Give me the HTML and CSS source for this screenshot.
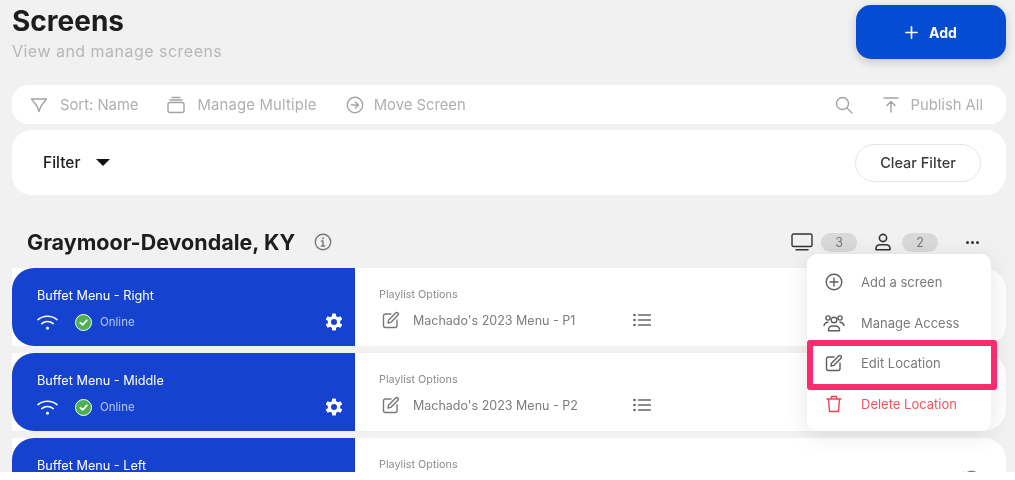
FILE: index.html
```html
<!DOCTYPE html>
<html lang="en">
<head>
    <meta charset="UTF-8">
    <title>Screens</title>
    <link rel="stylesheet" href="styles.css">
</head>
<body>
    <svg class="sprite" width="0" height="0">
        <symbol id="i-funnel" viewBox="0 0 18 18"><path d="M1.5 3h15l-5.6 7.2L9 15.5l-1.9-5.3z"/></symbol>
        <symbol id="i-stack" viewBox="0 0 18 18"><rect x="1" y="6.5" width="16" height="10" rx="2"/><path d="M3 4h12M5 1.5h8"/></symbol>
        <symbol id="i-move" viewBox="0 0 18 18"><circle cx="9" cy="9" r="7.7"/><path d="M5.2 9h7M9.4 6l3 3-3 3"/></symbol>
        <symbol id="i-search" viewBox="0 0 18 18"><circle cx="7.5" cy="7.5" r="6"/><path d="M12 12l5 5"/></symbol>
        <symbol id="i-publish" viewBox="0 0 18 18"><path d="M2 2h14M9 16V6M5 9.5L9 5.5l4 4"/></symbol>
        <symbol id="i-plus" viewBox="0 0 14 14"><path d="M7 1v12M1 7h12"/></symbol>
        <symbol id="i-info" viewBox="0 0 18 18"><circle cx="9" cy="9" r="7.7"/><path d="M7.5 8H9v5M7.3 13h3.4M9 4.8v1"/></symbol>
        <symbol id="i-wifi" viewBox="0 0 20 16"><path d="M1 5.2c5-4.2 13-4.2 18 0M4.6 9c3-2.6 7.8-2.6 10.8 0"/><circle class="solid" cx="10" cy="13.5" r="1.4"/></symbol>
        <symbol id="i-edit" viewBox="0 0 18 18"><path d="M9 3H3.5A2 2 0 0 0 1.5 5v9.5a2 2 0 0 0 2 2H13a2 2 0 0 0 2-2V9"/><path d="M6.5 9.2L13.6 2a1.5 1.5 0 0 1 2.3 2.2l-7.1 7.2-2.8.6z"/></symbol>
        <symbol id="i-list" viewBox="0 0 18 14"><path d="M5.5 2H17.5M5.5 7H17.5M5.5 12H17.5"/><circle class="solid" cx="1.5" cy="2" r="1.3"/><circle class="solid" cx="1.5" cy="7" r="1.3"/><circle class="solid" cx="1.5" cy="12" r="1.3"/></symbol>
        <symbol id="i-gear" viewBox="0 0 18 18"><circle class="gear-ring" cx="9" cy="9" r="4.6"/><g class="solid"><rect x="7" y="0.5" width="4" height="4" rx=".8"/><rect x="7" y="13.5" width="4" height="4" rx=".8"/><rect x="7" y="0.5" width="4" height="4" rx=".8" transform="rotate(60 9 9)"/><rect x="7" y="13.5" width="4" height="4" rx=".8" transform="rotate(60 9 9)"/><rect x="7" y="0.5" width="4" height="4" rx=".8" transform="rotate(120 9 9)"/><rect x="7" y="13.5" width="4" height="4" rx=".8" transform="rotate(120 9 9)"/></g></symbol>
        <symbol id="i-reload" viewBox="0 0 18 18"><path d="M2.5 8.5A7 6 0 0 1 16 7.5M1.5 4.5l1 4.2 4-1.4"/></symbol>
        <symbol id="i-monitor" viewBox="0 0 22 18"><rect x="1" y="1" width="20" height="12.5" rx="1.5"/><path d="M5 16.8h12"/></symbol>
        <symbol id="i-person" viewBox="0 0 16 18"><circle cx="8" cy="5" r="3.6"/><path d="M1 16.8v-1.3c0-2.4 2-3.8 4-3.8h6c2 0 4 1.400 4 3.800v1.300z"/></symbol>
        <symbol id="i-plus-circle" viewBox="0 0 18 18"><circle cx="9" cy="9" r="7.8"/><path d="M9 5v8M5 9h8"/></symbol>
        <symbol id="i-users" viewBox="0 0 22 18"><circle cx="5" cy="4" r="2.1"/><circle cx="17" cy="4" r="2.1"/><circle cx="11" cy="6" r="2.8"/><path d="M5.5 16.8v-1.3c0-2 2-3.500 3.500-3.500h4c1.500 0 3.500 1.500 3.500 3.500v1.300zM1 11.500c.5-2 2-3.300 4-3.300M21 11.500c-.5-2-2-3.300-4-3.300"/></symbol>
        <symbol id="i-trash" viewBox="0 0 16 18"><path d="M1 4h14M5 4l.6-2.500h4.800L11 4M2.500 4l1 12.500h9l1-12.500"/></symbol>
    </svg>

    <div class="app">
        <header class="page-head">
            <div>
                <h1>Screens</h1>
                <p class="subtitle">View and manage screens</p>
            </div>
            <button class="add-btn"><svg class="icon-plus"><use href="#i-plus"/></svg>Add</button>
        </header>

        <div class="toolbar">
            <span class="tool"><svg class="icon"><use href="#i-funnel"/></svg>Sort: Name</span>
            <span class="tool tool-manage"><svg class="icon"><use href="#i-stack"/></svg>Manage Multiple</span>
            <span class="tool tool-move"><svg class="icon"><use href="#i-move"/></svg>Move Screen</span>
            <span class="tool tool-search"><svg class="icon"><use href="#i-search"/></svg></span>
            <span class="tool tool-publish"><svg class="icon"><use href="#i-publish"/></svg>Publish All</span>
        </div>

        <div class="filter-card">
            <span class="filter-label">Filter</span>
            <span class="caret"></span>
            <button class="clear-btn">Clear Filter</button>
        </div>

        <section class="location">
            <div class="location-head">
                <h2>Graymoor-Devondale, KY</h2>
                <svg class="icon-info"><use href="#i-info"/></svg>
                <div class="location-stats">
                    <svg class="icon-monitor"><use href="#i-monitor"/></svg>
                    <span class="pill">3</span>
                    <svg class="icon-person"><use href="#i-person"/></svg>
                    <span class="pill">2</span>
                    <span class="more"><i></i><i></i><i></i></span>
                </div>

                <div class="menu">
                    <div class="menu-item"><svg class="menu-icon"><use href="#i-plus-circle"/></svg>Add a screen</div>
                    <div class="menu-item"><svg class="menu-icon menu-icon-wide"><use href="#i-users"/></svg>Manage Access</div>
                    <div class="menu-item"><svg class="menu-icon"><use href="#i-edit"/></svg>Edit Location</div>
                    <div class="menu-item danger"><svg class="menu-icon"><use href="#i-trash"/></svg>Delete Location</div>
                    <div class="highlight"></div>
                </div>
            </div>

            <div class="screen-row">
                <div class="screen-main">
                    <div class="screen-name">Buffet Menu - Right</div>
                    <div class="screen-status">
                        <svg class="icon-wifi"><use href="#i-wifi"/></svg>
                        <span class="dot-ok"><svg viewBox="0 0 10 10"><path d="M2 5.2l2.2 2L8 3"/></svg></span>
                        <span>Online</span>
                        <svg class="icon-gear"><use href="#i-gear"/></svg>
                    </div>
                </div>
                <div class="screen-playlist">
                    <div class="playlist-label">Playlist Options</div>
                    <div class="playlist-line">
                        <svg class="icon-edit"><use href="#i-edit"/></svg>
                        <span class="playlist-name">Machado's 2023 Menu - P1</span>
                        <svg class="icon-list"><use href="#i-list"/></svg>
                    </div>
                </div>
                <svg class="icon-reload"><use href="#i-reload"/></svg>
            </div>

            <div class="screen-row">
                <div class="screen-main">
                    <div class="screen-name">Buffet Menu - Middle</div>
                    <div class="screen-status">
                        <svg class="icon-wifi"><use href="#i-wifi"/></svg>
                        <span class="dot-ok"><svg viewBox="0 0 10 10"><path d="M2 5.2l2.2 2L8 3"/></svg></span>
                        <span>Online</span>
                        <svg class="icon-gear"><use href="#i-gear"/></svg>
                    </div>
                </div>
                <div class="screen-playlist">
                    <div class="playlist-label">Playlist Options</div>
                    <div class="playlist-line">
                        <svg class="icon-edit"><use href="#i-edit"/></svg>
                        <span class="playlist-name">Machado's 2023 Menu - P2</span>
                        <svg class="icon-list"><use href="#i-list"/></svg>
                    </div>
                </div>
                <svg class="icon-reload"><use href="#i-reload"/></svg>
            </div>

            <div class="screen-row">
                <div class="screen-main">
                    <div class="screen-name">Buffet Menu - Left</div>
                </div>
                <div class="screen-playlist">
                    <div class="playlist-label">Playlist Options</div>
                </div>
                <svg class="icon-reload"><use href="#i-reload"/></svg>
            </div>
        </section>
    </div>
</body>
</html>
```

FILE: styles.css
```css
* {
    box-sizing: border-box;
}
body {
    margin: 0;
    background-color: #fff;
    font-family: Inter, "Liberation Sans", sans-serif;
    color: #1c1c1c;
}
.sprite {
    position: absolute;
}
svg {
    display: block;
    flex: none;
    fill: none;
    stroke: currentColor;
    stroke-width: 1.4;
    stroke-linecap: round;
    stroke-linejoin: round;
}
.solid {
    fill: currentColor;
    stroke: none;
}
.app {
    height: 472px;
    overflow: hidden;
    padding: 5px 9px 0 12px;
    background-color: #f1f1f1;
    filter: blur(0.4px);
}

/* header */
.page-head {
    display: flex;
    justify-content: space-between;
    align-items: flex-start;
    height: 56px;
}
h1 {
    margin: 0;
    font-size: 28px;
    line-height: 32px;
    font-weight: 700;
    color: #1d1d1d;
}
.subtitle {
    margin: 4px 0 0;
    font-size: 16px;
    line-height: 20px;
    letter-spacing: 0.48px;
    color: #b7b7b7;
}
.add-btn {
    display: flex;
    align-items: center;
    justify-content: center;
    gap: 11px;
    width: 150px;
    height: 54px;
    border: none;
    border-radius: 15px;
    background-color: #044cd2;
    box-shadow: 0 3px 10px rgba(0, 0, 0, 0.18);
    color: #fff;
    font-family: inherit;
    font-size: 14px;
    font-weight: 700;
}
.icon-plus {
    width: 13px;
    height: 13px;
    stroke-width: 1.8;
}

/* toolbar */
.toolbar {
    display: flex;
    align-items: center;
    gap: 29px;
    height: 39px;
    margin-top: 24px;
    padding: 0 23px 0 18px;
    border-radius: 16px;
    background-color: #fff;
    font-size: 14.8px;
    color: #b0b0b0;
}
.tool {
    display: flex;
    align-items: center;
    gap: 12px;
}
.tool-manage {
    letter-spacing: 0.2px;
}
.tool-move {
    gap: 10px;
}
.tool-search {
    margin-left: auto;
}
.tool-publish {
    gap: 10px;
}
.icon {
    width: 18px;
    height: 18px;
    color: #a3a3a3;
}

/* filter */
.filter-card {
    display: flex;
    align-items: center;
    height: 65px;
    margin-top: 6px;
    padding: 0 25px 0 31px;
    border-radius: 20px;
    background-color: #fff;
}
.filter-label {
    font-size: 15.5px;
    font-weight: 500;
    color: #1c1c1c;
}
.caret {
    width: 0;
    height: 0;
    margin-left: 16px;
    border-left: 7px solid transparent;
    border-right: 7px solid transparent;
    border-top: 7px solid #111;
}
.clear-btn {
    width: 126px;
    height: 38px;
    margin-left: auto;
    border: 1.5px solid #e6e6e6;
    border-radius: 19px;
    background: #fff;
    font-family: inherit;
    font-size: 14.5px;
    font-weight: 500;
    color: #3a3a3a;
}

/* location */
.location {
    margin-top: 35px;
}
.location-head {
    position: relative;
    display: flex;
    align-items: center;
    height: 24px;
    margin-bottom: 14px;
    padding: 0 27px 0 15px;
}
h2 {
    margin: 0;
    font-size: 21.5px;
    font-weight: 700;
    color: #1d1d1d;
}
.icon-info {
    width: 18px;
    height: 18px;
    margin-left: 19px;
    color: #777;
}
.location-stats {
    display: flex;
    align-items: center;
    margin-left: auto;
    color: #333;
}
.icon-monitor {
    width: 22px;
    height: 18px;
}
.icon-person {
    width: 16px;
    height: 18px;
    margin-left: 18px;
    stroke-width: 1.6;
}
.pill {
    width: 36px;
    height: 19px;
    margin-left: 8px;
    border-radius: 10px;
    background-color: #d9d9d9;
    font-size: 12.5px;
    line-height: 19px;
    text-align: center;
    color: #777;
}
.icon-person + .pill {
    margin-left: 11px;
}
.more {
    display: flex;
    gap: 2px;
    margin-left: 28px;
}
.more i {
    width: 3px;
    height: 3px;
    border-radius: 50%;
    background-color: #333;
}

/* rows */
.screen-row {
    display: flex;
    align-items: stretch;
    height: 78px;
    margin-bottom: 7px;
    border-radius: 0 22px 22px 0;
    background-color: #fff;
}
.screen-main {
    width: 343px;
    padding: 19px 12px 0 25px;
    border-radius: 22px 0 0 22px;
    background-color: #1543cf;
    color: #fff;
}
.screen-name {
    font-size: 12.7px;
    line-height: 17px;
}
.screen-status {
    display: flex;
    align-items: center;
    margin-top: 9px;
    font-size: 11.5px;
    color: #b8c6f2;
}
.icon-wifi {
    width: 21px;
    height: 17px;
    margin-right: 17px;
    color: #fff;
    stroke-width: 1.6;
}
.dot-ok {
    display: flex;
    align-items: center;
    justify-content: center;
    width: 17px;
    height: 17px;
    margin-right: 8px;
    border: 1.5px solid #fff;
    border-radius: 50%;
    background-color: #4caf50;
}
.dot-ok svg {
    width: 11px;
    height: 11px;
    color: #fff;
    stroke-width: 1.6;
}
.icon-gear {
    width: 18px;
    height: 18px;
    margin-left: auto;
    color: #fff;
}
.gear-ring {
    stroke-width: 3.2;
}
.screen-playlist {
    padding: 19px 0 0 24px;
}
.playlist-label {
    font-size: 10.8px;
    line-height: 16px;
    color: #8c8c8c;
}
.playlist-line {
    display: flex;
    align-items: center;
    margin-top: 8px;
    font-size: 12.5px;
    color: #7c7c7c;
}
.icon-edit {
    width: 18px;
    height: 18px;
    margin: 0 13px 0 3px;
    color: #777;
}
.playlist-name {
    width: 220px;
}
.icon-list {
    width: 18px;
    height: 14px;
    color: #666;
}
.icon-reload {
    align-self: center;
    width: 18px;
    height: 18px;
    margin: 0 26px 0 auto;
    color: #777;
}

/* dropdown */
.menu {
    position: absolute;
    top: 24px;
    right: 15px;
    width: 184px;
    height: 177px;
    padding-top: 8px;
    border-radius: 10px;
    background-color: #fff;
    box-shadow: 0 4px 24px rgba(0, 0, 0, 0.1);
}
.menu-item {
    display: flex;
    align-items: center;
    height: 40.5px;
    padding-left: 18px;
    font-size: 13px;
    color: #7a7a7a;
}
.menu-icon {
    width: 18px;
    height: 18px;
    margin-right: 18px;
    color: #5e5e5e;
}
.menu-icon-wide {
    width: 22px;
    margin: 0 16px 0 -2px;
}
.danger {
    color: #ef5460;
}
.danger .menu-icon {
    color: #ee4452;
}
.highlight {
    position: absolute;
    top: 86px;
    left: 0;
    width: 190px;
    height: 50px;
    border: 6px solid #fb2c6d;
    border-radius: 3px;
}
```
